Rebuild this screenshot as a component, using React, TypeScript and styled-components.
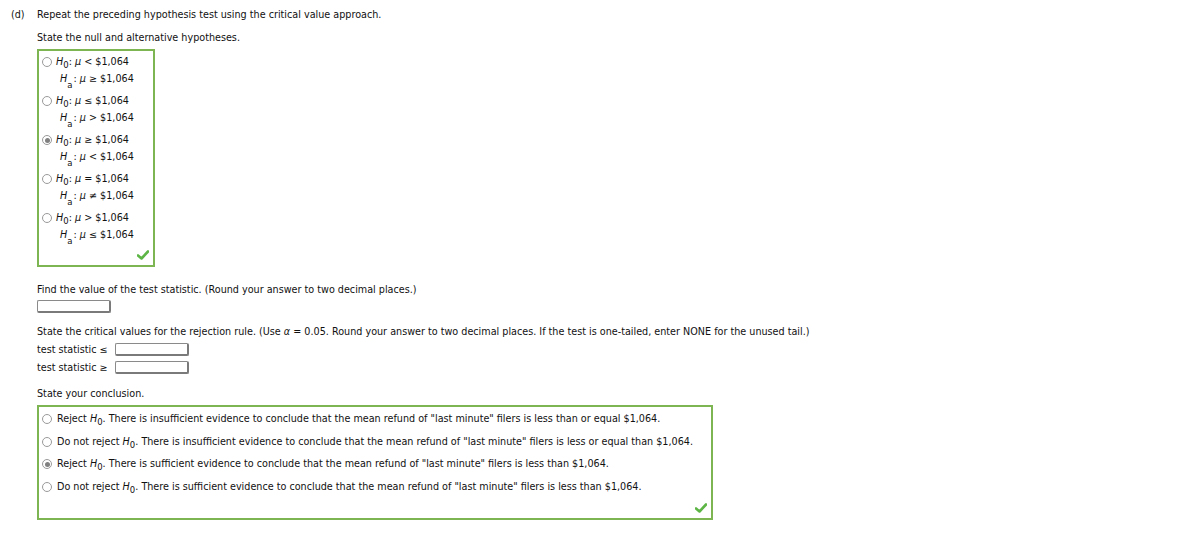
import styled, { createGlobalStyle } from 'styled-components';

const GlobalStyle = createGlobalStyle`
    body {
        margin: 0;
        background: #ffffff;
        font-family: "DejaVu Sans", Verdana, sans-serif;
        font-size: 9.65px;
        color: #111111;
    }
`

const Page = styled.div`
    padding: 9px 0 0 11px;
    display: flex;
    gap: 7px;
`
const PartLabel = styled.div`
    width: 19px;
`
const Body = styled.div`
    display: flex;
    flex-direction: column;
    align-items: flex-start;
`
const Prompt = styled.div<{ $top?: number }>`
    margin-top: ${p => p.$top ?? 0}px;
    line-height: 11px;
    white-space: nowrap;
`
const AnswerBox = styled.div<{ $w?: number }>`
    position: relative;
    border: 2px solid #7cb552;
    margin-top: 6px;
    padding: 5px 14px 14px 3px;
    width: ${p => (p.$w ? `${p.$w}px` : 'auto')};
    box-sizing: border-box;
`
const HypOption = styled.div`
    display: flex;
    align-items: flex-start;
    gap: 4px;
    height: 39px;
`
const Radio = styled.span<{ $on?: boolean }>`
    width: 10px;
    height: 10px;
    border-radius: 50%;
    border: 1px solid #9a9a9a;
    background: #fff;
    box-sizing: border-box;
    flex: none;
    margin-top: 1px;
    display: flex;
    align-items: center;
    justify-content: center;
    &::after {
        content: '';
        width: 5px;
        height: 5px;
        border-radius: 50%;
        background: ${p => (p.$on ? '#808080' : 'transparent')};
    }
`
const HypLines = styled.div`
    display: flex;
    flex-direction: column;
    gap: 6px;
`
const HypLine = styled.div<{ $indent?: boolean }>`
    line-height: 11px;
    padding-left: ${p => (p.$indent ? 4 : 0)}px;
    white-space: nowrap;
`
const Ital = styled.i`
    font-style: italic;
`
const Sub = styled.sub<{ $low?: boolean }>`
    font-size: 8.5px;
    vertical-align: ${p => (p.$low ? '-6px' : '-3px')};
    line-height: 0;
    margin-right: ${p => (p.$low ? 1 : 0)}px;
`
const Check = styled.svg`
    position: absolute;
    right: 4px;
    bottom: 5px;
    width: 12px;
    height: 10px;
`
const Field = styled.span<{ $top?: number }>`
    display: inline-block;
    width: 74px;
    height: 13px;
    margin-top: ${p => p.$top ?? 0}px;
    box-sizing: border-box;
    border: 1px solid #8a8a8a;
    border-right: 2px solid #7a7a7a;
    border-bottom: 2px solid #7a7a7a;
    border-radius: 2px;
    background: #fff;
`
const StatRow = styled.div<{ $top: number }>`
    display: flex;
    align-items: center;
    gap: 6px;
    margin-top: ${p => p.$top}px;
    line-height: 11px;
`
const StatLabel = styled.span`
    width: 72px;
    white-space: nowrap;
`
const ConcList = styled(AnswerBox)`
    padding: 0 0 20px 3px;
`
const ConcOption = styled.div`
    display: flex;
    align-items: center;
    gap: 5px;
    height: 22.7px;
    white-space: nowrap;
`

const CheckMark = () => (
    <Check viewBox="0 0 12 10">
        <path d="M1 5.5 L4.5 8.5 L11 1.5" fill="none" stroke="#5cb545" strokeWidth="2.6" strokeLinecap="round" strokeLinejoin="round" />
    </Check>
)

const H0 = () => <><Ital>H</Ital><Sub>0</Sub></>
const Ha = () => <><Ital>H</Ital><Sub $low>a</Sub></>

const hyps = [
    { h0: '< $1,064', ha: '≥ $1,064', on: false },
    { h0: '≤ $1,064', ha: '> $1,064', on: false },
    { h0: '≥ $1,064', ha: '< $1,064', on: true },
    { h0: '= $1,064', ha: '≠ $1,064', on: false },
    { h0: '> $1,064', ha: '≤ $1,064', on: false },
]

const conclusions = [
    { verb: 'Reject', rest: 'There is insufficient evidence to conclude that the mean refund of "last minute" filers is less than or equal $1,064.', on: false },
    { verb: 'Do not reject', rest: 'There is insufficient evidence to conclude that the mean refund of "last minute" filers is less or equal than $1,064.', on: false },
    { verb: 'Reject', rest: 'There is sufficient evidence to conclude that the mean refund of "last minute" filers is less than $1,064.', on: true },
    { verb: 'Do not reject', rest: 'There is sufficient evidence to conclude that the mean refund of "last minute" filers is less than $1,064.', on: false },
]

const App = () => {
    return (
        <>
            <GlobalStyle />
            <Page>
                <PartLabel>(d)</PartLabel>
                <Body>
                    <Prompt>Repeat the preceding hypothesis test using the critical value approach.</Prompt>
                    <Prompt $top={12}>State the null and alternative hypotheses.</Prompt>
                    <AnswerBox $w={118}>
                        {hyps.map((h, i) => (
                            <HypOption key={i}>
                                <Radio $on={h.on} />
                                <HypLines>
                                    <HypLine><H0 />: <Ital>μ</Ital> {h.h0}</HypLine>
                                    <HypLine $indent><Ha />: <Ital>μ</Ital> {h.ha}</HypLine>
                                </HypLines>
                            </HypOption>
                        ))}
                        <CheckMark />
                    </AnswerBox>
                    <Prompt $top={17}>Find the value of the test statistic. (Round your answer to two decimal places.)</Prompt>
                    <Field $top={5} />
                    <Prompt $top={13}>State the critical values for the rejection rule. (Use <Ital>α</Ital> = 0.05. Round your answer to two decimal places. If the test is one-tailed, enter NONE for the unused tail.)</Prompt>
                    <StatRow $top={6}><StatLabel>test statistic ≤</StatLabel><Field /></StatRow>
                    <StatRow $top={5}><StatLabel>test statistic ≥</StatLabel><Field /></StatRow>
                    <Prompt $top={14}>State your conclusion.</Prompt>
                    <ConcList $w={676}>
                        {conclusions.map((c, i) => (
                            <ConcOption key={i}>
                                <Radio $on={c.on} />
                                <span>{c.verb} <H0 />. {c.rest}</span>
                            </ConcOption>
                        ))}
                        <CheckMark />
                    </ConcList>
                </Body>
            </Page>
        </>
    )
}

export default App
